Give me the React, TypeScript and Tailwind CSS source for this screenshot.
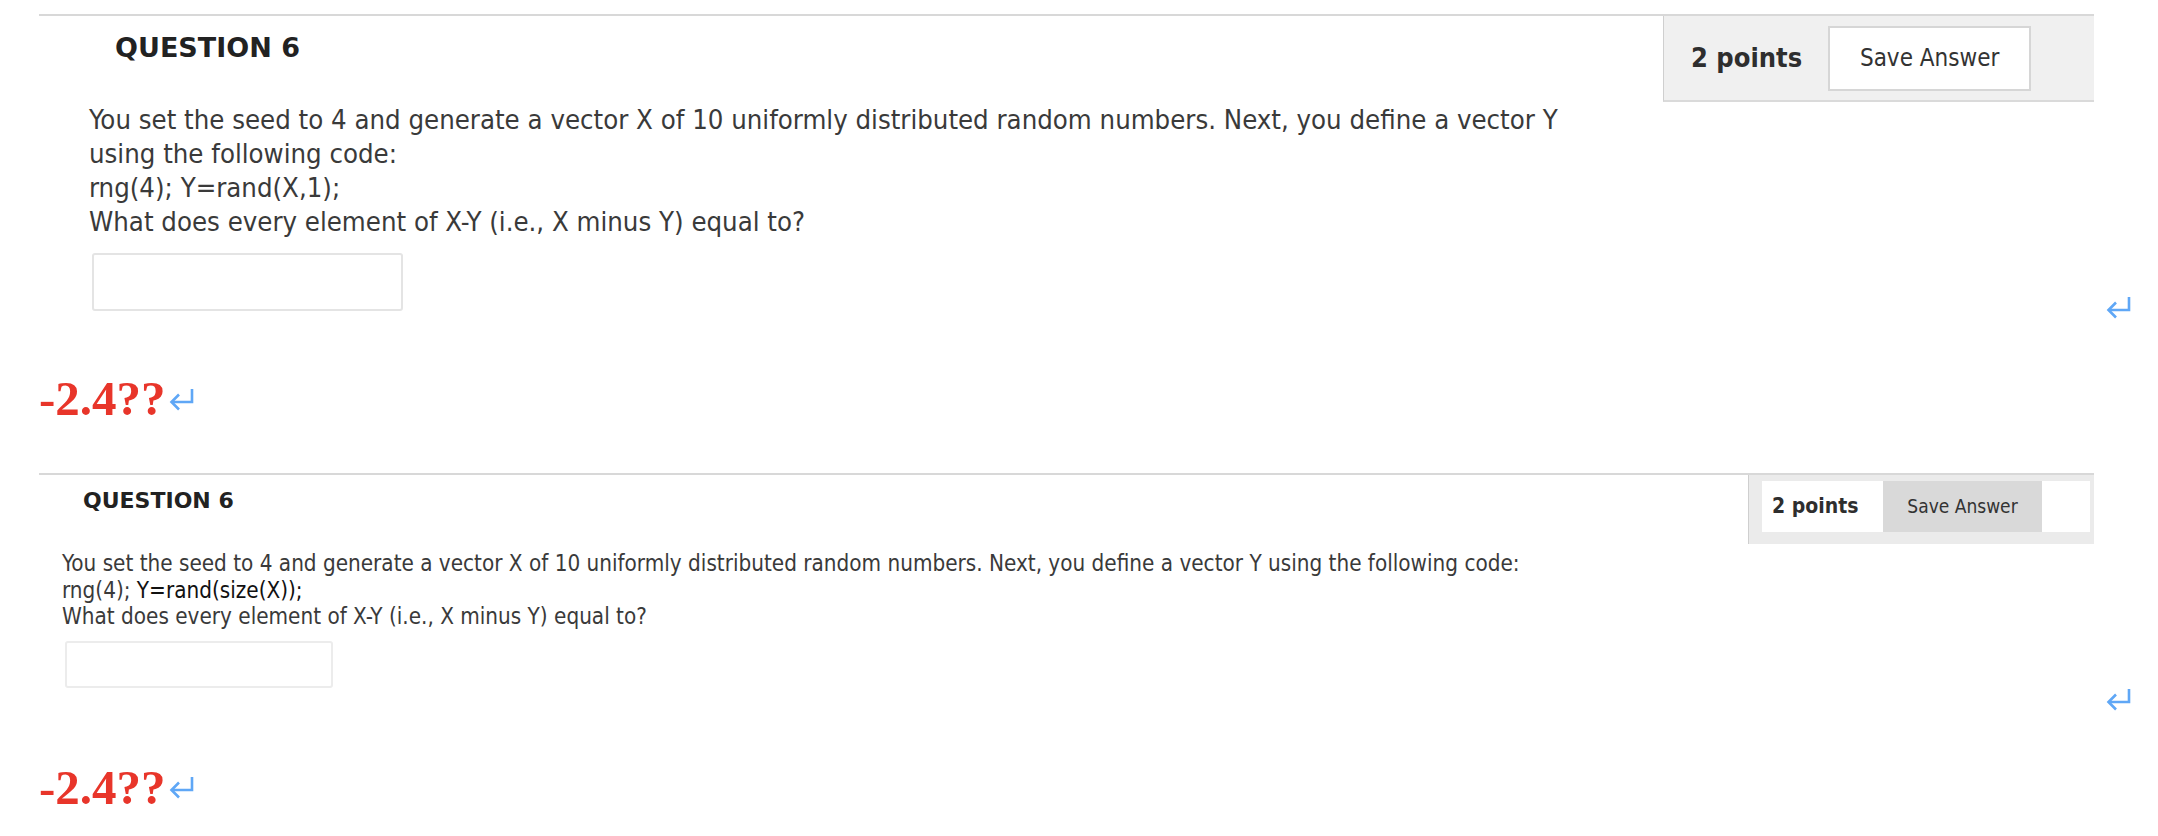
import React from 'react';

const ReturnMark: React.FC = () => (
  <svg width="27" height="24" viewBox="0 0 27 24" fill="none" className="shrink-0">
    <path d="M24 1 V14 H4" stroke="#5fa7f6" strokeWidth="2.6" />
    <path d="M11 6.5 L3.5 14 L11 21.5" stroke="#5fa7f6" strokeWidth="2.6" />
  </svg>
);

const Answer: React.FC<{ className?: string }> = ({ className }) => (
  <div className={`flex items-center ${className ?? ''}`}>
    <span className="font-['Liberation_Serif','Times_New_Roman',serif] font-bold text-[49px] leading-[49px] text-[#e8352a]">
      -2.4??
    </span>
    <span className="mt-[2px] ml-[2px]">
      <ReturnMark />
    </span>
  </div>
);

const App: React.FC = () => {
  return (
    <div className="w-full h-[836px] bg-white overflow-hidden font-['Tahoma','DejaVu_Sans_Condensed','DejaVu_Sans',sans-serif] text-[#3a3a3a]">
      {/* first screenshot, larger zoom */}
      <div className="flex items-end ml-[39px] pt-[14px]">
        <div className="w-[2055px] border-t-2 border-[#d8d8d8] flex">
          <div className="flex-1 pl-[50px] pb-[9px]">
            <h2 className="pl-[26px] pt-[16px] font-['DejaVu_Sans',sans-serif] text-[27px] leading-[32px] font-bold text-[#222]">
              QUESTION 6
            </h2>
            <div className="mt-[39px] text-[27.3px] leading-[34px]">
              <p>You set the seed to 4 and generate a vector X of 10 uniformly distributed random numbers. Next, you define a vector Y</p>
              <p>using the following code:</p>
              <p>rng(4); Y=rand(X,1);</p>
              <p>What does every element of X-Y (i.e., X minus Y) equal to?</p>
            </div>
            <div className="mt-[14px] ml-[3px] w-[311px] h-[58px] border-2 border-[#e4e4e4] rounded-[3px] bg-white" />
          </div>
          <div className="w-[431px] h-[86px] bg-[#f0f0f0] border-l border-[#cfcfcf] border-b-2 border-b-[#dadada] flex items-center">
            <span className="ml-[27px] text-[27px] font-bold text-[#2e2e2e]">2 points</span>
            <button className="ml-[26px] w-[203px] h-[65px] bg-white border-2 border-[#d6d6d6] text-[24px] text-[#333]">
              Save Answer
            </button>
          </div>
        </div>
        <div className="ml-[11px]">
          <ReturnMark />
        </div>
      </div>

      <Answer className="ml-[39px] mt-[54px]" />

      {/* second screenshot, smaller zoom */}
      <div className="flex items-end ml-[39px] mt-[50px]">
        <div className="w-[2055px] border-t-2 border-[#d8d8d8] flex">
          <div className="flex-1 pl-[23px] pb-[24px]">
            <h2 className="pl-[21px] pt-[13px] font-['DejaVu_Sans',sans-serif] text-[22px] leading-[26px] font-bold text-[#222]">
              QUESTION 6
            </h2>
            <div className="mt-[36px] text-[22.3px] leading-[26.5px]">
              <p>You set the seed to 4 and generate a vector X of 10 uniformly distributed random numbers. Next, you define a vector Y using the following code:</p>
              <p>rng(4); <span className="text-[#111]">Y=rand(size(X));</span></p>
              <p>What does every element of X-Y (i.e., X minus Y) equal to?</p>
            </div>
            <div className="mt-[11px] ml-[3px] w-[268px] h-[47px] border-2 border-[#ececec] rounded-[3px] bg-white" />
          </div>
          <div className="w-[346px] h-[69px] bg-[#ebebeb] border-l border-[#cfcfcf] pl-[13px] pr-[4px] pt-[6px] pb-[12px] flex">
            <div className="flex-1 bg-white flex items-stretch">
              <span className="flex items-center pl-[10px] w-[121px] text-[21px] font-bold text-[#2e2e2e]">2 points</span>
              <button className="w-[159px] bg-[#d9d9d9] text-[19px] text-[#333]">Save Answer</button>
            </div>
          </div>
        </div>
        <div className="ml-[11px]">
          <ReturnMark />
        </div>
      </div>

      <Answer className="ml-[39px] mt-[51px]" />
    </div>
  );
};

export default App;
